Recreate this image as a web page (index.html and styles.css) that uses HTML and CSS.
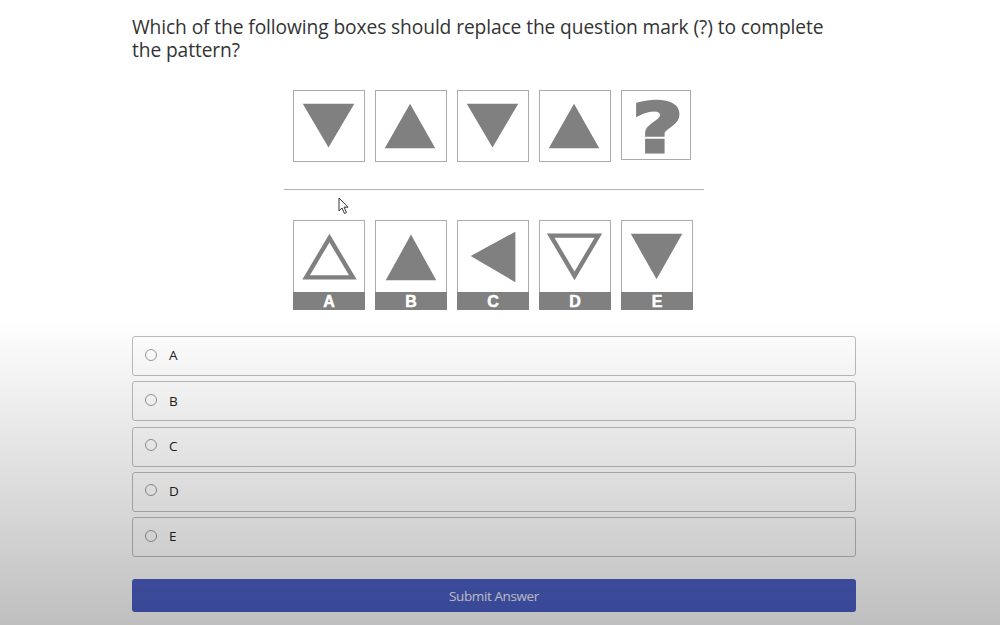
FILE: index.html
```html
<!DOCTYPE html>
<html lang="en">
<head>
<meta charset="utf-8">
<title>Pattern question</title>
<link rel="stylesheet" href="styles.css">
</head>
<body>
<main class="quiz">
  <p class="question">Which of the following boxes should replace the question mark (?) to complete the pattern?</p>

  <div class="figure">
    <div class="row">
      <div class="cell"><svg viewBox="0 0 72 72"><polygon points="9,13 62,13 35.5,58" class="fill"/></svg></div>
      <div class="cell"><svg viewBox="0 0 72 72"><polygon points="9,59 61,59 35,13" class="fill"/></svg></div>
      <div class="cell"><svg viewBox="0 0 72 72"><polygon points="9,13 62,13 35.5,58" class="fill"/></svg></div>
      <div class="cell"><svg viewBox="0 0 72 72"><polygon points="9,59 61,59 35,13" class="fill"/></svg></div>
      <div class="cell qmark"><span class="qglyph">?</span></div>
    </div>

    <hr class="divider">

    <div class="row answers">
      <div class="choice">
        <div class="pic"><svg viewBox="0 0 72 72"><polygon points="12.5,58 60.5,58 36.5,17.5" class="line"/></svg></div>
        <div class="tag">A</div>
      </div>
      <div class="choice">
        <div class="pic"><svg viewBox="0 0 72 72"><polygon points="10,61 62,61 36,14" class="fill"/></svg></div>
        <div class="tag">B</div>
      </div>
      <div class="choice">
        <div class="pic"><svg viewBox="0 0 72 72"><polygon points="59,11 59,63 13,36" class="fill"/></svg></div>
        <div class="tag">C</div>
      </div>
      <div class="choice">
        <div class="pic"><svg viewBox="0 0 72 72"><polygon points="11,15 60,15 35.5,56.5" class="line"/></svg></div>
        <div class="tag">D</div>
      </div>
      <div class="choice">
        <div class="pic"><svg viewBox="0 0 72 72"><polygon points="9,13 62,13 35.5,60" class="fill"/></svg></div>
        <div class="tag">E</div>
      </div>
    </div>
  </div>

  <form class="options">
    <label class="option"><span class="radio"></span><span class="opt-text">A</span></label>
    <label class="option"><span class="radio"></span><span class="opt-text">B</span></label>
    <label class="option"><span class="radio"></span><span class="opt-text">C</span></label>
    <label class="option"><span class="radio"></span><span class="opt-text">D</span></label>
    <label class="option"><span class="radio"></span><span class="opt-text">E</span></label>
    <button type="button" class="submit">Submit Answer</button>
  </form>
</main>

<svg class="cursor" viewBox="0 0 12 18" width="12" height="18"><path d="M1,1 L1,14 L4,11 L6.5,16.5 L8.5,15.5 L6,10.2 L10,10.2 Z" fill="#fff" stroke="#333" stroke-width="1" stroke-linejoin="round"/></svg>
<div class="shade"></div>
</body>
</html>
```

FILE: styles.css
```css
html, body {
  margin: 0;
  padding: 0;
  background: #ffffff;
}

body {
  width: 1000px;
  height: 625px;
  overflow: hidden;
  position: relative;
  font-family: "Open Sans", "Noto Sans", sans-serif;
  color: #333;
}

.quiz {
  width: 724px;
  padding: 15px 0 0 132px;
}

.question {
  margin: 0;
  font-size: 19.2px;
  line-height: 23px;
  color: #333;
  letter-spacing: -0.1px;
}

.figure {
  width: 420px;
  margin: 29px 0 0 152px;
}

.row {
  display: flex;
  gap: 10px;
  padding-left: 9px;
}

.cell {
  width: 70px;
  height: 70px;
  border: 1px solid #ababab;
  background: #fff;
}

.cell svg,
.pic svg {
  display: block;
  width: 70px;
  height: 70px;
}

.fill {
  fill: #808080;
}

.line {
  fill: none;
  stroke: #808080;
  stroke-width: 4.5;
  stroke-linejoin: miter;
}

.qmark {
  display: flex;
  align-items: center;
  justify-content: center;
  font-family: "DejaVu Sans", "Liberation Sans", sans-serif;
  font-weight: 700;
  font-size: 68px;
  line-height: 1;
  color: #808080;
  padding-top: 8px;
  padding-left: 3px;
  box-sizing: border-box;
}

.qglyph {
  display: inline-block;
  -webkit-text-stroke: 3px #808080;
  transform: scaleX(1.3);
}

.divider {
  border: 0;
  height: 1px;
  background: #b3b3b3;
  margin: 27px 0 30px;
}

.answers {
  padding-left: 9px;
}

.choice {
  width: 72px;
  display: flex;
  flex-direction: column;
}

.pic {
  width: 70px;
  height: 71px;
  border: 1px solid #ababab;
  border-bottom: 0;
  background: #fff;
}

.tag {
  height: 18px;
  background: #808080;
  color: #fff;
  font-family: "Liberation Sans", Arial, sans-serif;
  font-weight: 700;
  font-size: 16px;
  line-height: 19px;
  text-align: center;
  -webkit-text-stroke: 0.5px #fff;
}

.options {
  margin-top: 26px;
  display: flex;
  flex-direction: column;
  gap: 5.3px;
}

.option {
  height: 38px;
  border: 1px solid #bdbdbd;
  border-radius: 3px;
  background: #fff;
  display: flex;
  align-items: center;
  padding-left: 12px;
  box-sizing: content-box;
}

.radio {
  width: 10px;
  height: 10px;
  border: 1px solid #9a9a9a;
  border-radius: 50%;
  background: #fff;
  margin-top: -3px;
}

.opt-text {
  margin-left: 12px;
  font-size: 13.5px;
  color: #222;
  line-height: 1;
}

.submit {
  margin-top: 17px;
  height: 33px;
  border: 0;
  border-radius: 3px;
  background: #4b5fc5;
  color: #eef0fb;
  font-family: "Open Sans", "Noto Sans", sans-serif;
  font-size: 13.5px;
  letter-spacing: -0.4px;
  padding: 0;
}

.cursor {
  position: absolute;
  left: 338px;
  top: 197px;
}

.shade {
  position: absolute;
  inset: 0;
  pointer-events: none;
  background: linear-gradient(to bottom, rgba(0,0,0,0) 0%, rgba(0,0,0,0) 51%, rgba(0,0,0,0.25) 100%);
}
```
